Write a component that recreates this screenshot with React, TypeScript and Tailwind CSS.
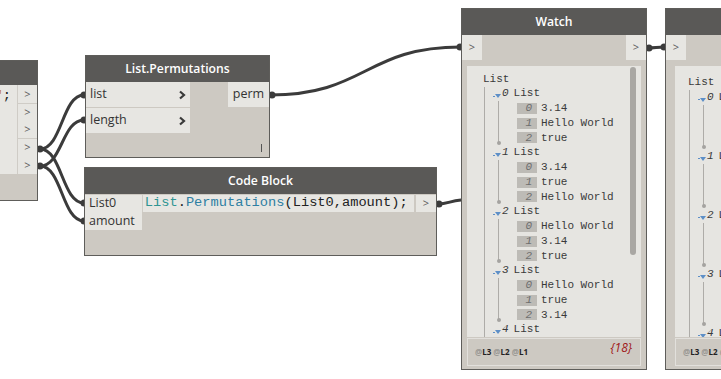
import React from 'react';

const UI = "font-['Open_Sans','Noto_Sans',sans-serif]";
const MONO = "font-['Liberation_Mono','DejaVu_Sans_Mono',monospace]";

// permutations of {3.14, "Hello World", true}
const groups: string[][] = [
    ['3.14', 'Hello World', 'true'],
    ['3.14', 'true', 'Hello World'],
    ['Hello World', '3.14', 'true'],
    ['Hello World', 'true', '3.14'],
    ['true', '3.14', 'Hello World'],
    ['true', 'Hello World', '3.14'],
];

const Header = ({ title }: { title?: string }) => (
    <div className={`h-[26px] bg-[#5a5957] flex items-center justify-center text-white text-[12.2px] font-semibold ${UI}`}>
        {title}
    </div>
);

const Port = ({ className = '' }: { className?: string }) => (
    <div className={`flex items-center justify-center text-[#5b5b5b] text-[11px] bg-[#e7e6e2] ${UI} ${className}`}>&gt;</div>
);

const Chevron = () => (
    <svg width="8" height="10" viewBox="0 0 8 10">
        <path d="M2 1.5 L6 5 L2 8.5" fill="none" stroke="#3a3a3a" strokeWidth="2.2" />
    </svg>
);

const Tree = ({ indent, top }: { indent: number; top: number }) => (
    <div className={`absolute inset-0 ${MONO} text-[11px] text-[#3a3a3a]`} style={{ paddingLeft: indent, paddingTop: top }}>
        <div className="relative">
            {/* main branch line */}
            <div className="absolute left-[1px] top-[15px] h-[400px] w-px bg-[#aeaca8]" />
            <div className="h-[14.75px] flex items-center">List</div>
            {groups.map((items, g) => (
                <div key={g} className="relative">
                    <div className="absolute left-[15px] top-[15px] h-[41px] w-px bg-[#aeaca8]" />
                    <div className="absolute left-[13.5px] top-[55px] w-[4px] h-[4px] rounded-full bg-[#a5a3a0]" />
                    <div className="h-[14.75px] flex items-center">
                        <div className="ml-[10px] mt-[5px] flex items-center">
                            <div className="w-[2px] h-px bg-[#5d8fc7]" />
                            <div className="w-0 h-0 border-x-[3.5px] border-x-transparent border-t-[4px] border-t-[#5d8fc7]" />
                        </div>
                        <span className="italic ml-[1px]">{g}</span>
                        <span className="ml-[5px]">List</span>
                    </div>
                    {items.map((v, i) => (
                        <div key={i} className="h-[14.75px] flex items-center">
                            <div className="ml-[34px] w-[20px] h-[11px] bg-[#bdbbb6] text-[#6e6e6e] italic flex items-center justify-end pr-[5px]">
                                {i}
                            </div>
                            <span className="ml-[4px] whitespace-nowrap">{v}</span>
                        </div>
                    ))}
                </div>
            ))}
        </div>
    </div>
);

const WatchNode = ({ left, width, title, output, panelMl, indent, treeTop, footerTop }: {
    left: number; width: number; title?: string; output: boolean; panelMl: number; indent: number; treeTop: number; footerTop: number;
}) => (
    <div className="absolute top-[8px] h-[362px] border border-[#5e5d5a] bg-[#cdc9c2]" style={{ left, width }}>
        <Header title={title} />
        <div className="h-[25px] flex justify-between">
            <Port className="w-[20px]" />
            {output && <Port className="w-[20px]" />}
        </div>
        <div className="mt-[6px] mr-[5px] h-[271px] bg-[#e6e5e1] relative overflow-hidden" style={{ marginLeft: panelMl }}>
            <Tree indent={indent} top={treeTop} />
            {output && <div className="absolute right-[5px] top-[1px] w-[6px] h-[188px] rounded-full bg-[#a9a7a3]" />}
        </div>
        <div className="mr-[5px] h-[28px] border border-[#e2e0dc] flex items-center justify-between pl-[7px] pr-[8px]" style={{ marginLeft: panelMl, marginTop: footerTop }}>
            <div className={`text-[8px] font-bold text-[#222] whitespace-nowrap ${UI}`}>
                <span className="text-[#9a9894]">@</span>L3 <span className="text-[#9a9894]">@</span>L2 <span className="text-[#9a9894]">@</span>L1
            </div>
            <div className={`text-[12px] italic text-[#a01818] -mt-[8px] ${UI}`}>{'{18}'}</div>
        </div>
    </div>
);

const App: React.FC = () => {
    const wire = 'none';
    return (
        <div className="relative w-[721px] h-[379px] bg-white overflow-hidden">
            {/* connectors */}
            <svg className="absolute inset-0" width="721" height="379">
                <g fill={wire} stroke="#3b3b3b" strokeWidth="3">
                    <path d="M40 149 C62 149 62 95 84 95" />
                    <path d="M40 166 C62 166 62 120 84 120" />
                    <path d="M40 149 C62 149 62 203 84 203" />
                    <path d="M40 166 C62 166 62 221 84 221" />
                    <path d="M270 95 C366 95 365 47 461 47" />
                    <path d="M437 204 C449 204 449 201 461 200" />
                    <path d="M647 48 C656 48 656 47 665 47" />
                </g>
                <g fill="#3b3b3b">
                    <circle cx="40" cy="149" r="3.5" />
                    <circle cx="40" cy="166" r="3.5" />
                    <circle cx="84" cy="95" r="3.5" />
                    <circle cx="84" cy="120" r="3.5" />
                    <circle cx="84" cy="203" r="3.5" />
                    <circle cx="84" cy="221" r="3.5" />
                    <circle cx="272" cy="95" r="3.5" />
                    <circle cx="439" cy="204" r="3.5" />
                    <circle cx="460" cy="47" r="3.5" />
                    <circle cx="649" cy="48" r="3.5" />
                    <circle cx="664" cy="47" r="3.5" />
                </g>
            </svg>

            {/* partial code block on the left */}
            <div className="absolute left-[-10px] top-[60px] w-[48px] h-[141px] border border-[#5e5d5a] bg-[#cdc9c2]">
                <div className="h-[24px] bg-[#5a5957]" />
                <div className="flex h-[89px] bg-[#e7e6e2]">
                    <div className={`flex-1 flex justify-end pr-[6px] pt-[1px] text-[13.7px] ${MONO} text-[#222] overflow-hidden`}>
                        <span className="text-[#c27a2e]">"</span>;
                    </div>
                    <div className="w-[20px] border-l border-[#cfccc6] flex flex-col">
                        <Port className="h-[18px]" />
                        <Port className="h-[18px] border-t border-[#cfccc6]" />
                        <Port className="h-[17px]" />
                        <Port className="h-[18px] border-t border-[#cfccc6]" />
                        <Port className="h-[18px]" />
                    </div>
                </div>
            </div>

            {/* List.Permutations */}
            <div className="absolute left-[85px] top-[55px] w-[185px] h-[103px] border border-[#5e5d5a] bg-[#cdc9c2]">
                <Header title="List.Permutations" />
                <div className={`flex justify-between text-[12.5px] text-[#333] ${UI}`}>
                    <div className="flex flex-col gap-px w-[104px]">
                        <div className="h-[25px] bg-[#e7e6e2] flex items-center justify-between pl-[4px] pr-[4px]">
                            list <Chevron />
                        </div>
                        <div className="h-[25px] bg-[#e7e6e2] flex items-center justify-between pl-[4px] pr-[4px]">
                            length <Chevron />
                        </div>
                    </div>
                    <div className="h-[25px] w-[41px] bg-[#e7e6e2] flex items-center justify-center">perm</div>
                </div>
                <div className="absolute right-[7px] bottom-[5px] w-px h-[8px] bg-[#555]" />
            </div>

            {/* Code Block */}
            <div className="absolute left-[84px] top-[167px] w-[353px] h-[89px] border border-[#5e5d5a] bg-[#cdc9c2]">
                <Header title="Code Block" />
                <div className="flex mt-px">
                    <div className={`w-[57px] flex flex-col text-[12.5px] text-[#333] ${UI}`}>
                        <div className="h-[17px] bg-[#e7e6e2] flex items-center pl-[4px]">List0</div>
                        <div className="h-[18px] bg-[#e7e6e2] flex items-center pl-[4px]">amount</div>
                    </div>
                    <div className={`w-[273px] h-[17px] bg-[#e7e6e2] border-l border-[#cfccc6] flex items-center pl-[2px] text-[13.7px] text-[#222] ${MONO}`}>
                        <span className="text-[#2f9593]">List</span>.<span className="text-[#2e7fa3]">Permutations</span>(List0,amount);
                    </div>
                    <Port className="ml-[2px] w-[20px] h-[17px]" />
                </div>
            </div>

            <WatchNode left={461} width={186} title="Watch" output panelMl={5} indent={16} treeTop={5.6} footerTop={1} />
            <WatchNode left={665} width={200} output={false} panelMl={9} indent={13} treeTop={9} footerTop={1} />
        </div>
    );
};

export default App;
